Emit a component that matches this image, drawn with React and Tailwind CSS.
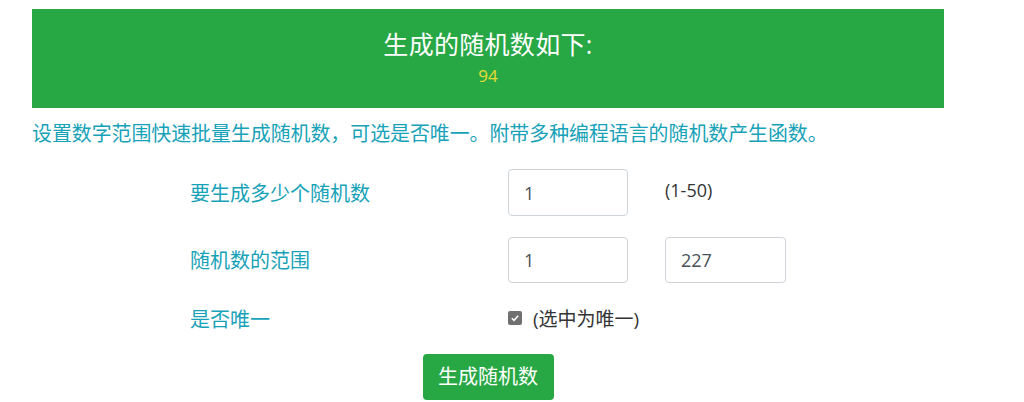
import { useState } from "react";

const font = { fontFamily: '"Open Sans", "Noto Sans CJK SC", sans-serif' };

export default function App() {
  const [count, setCount] = useState("1");
  const [min, setMin] = useState("1");
  const [max, setMax] = useState("227");
  const [unique, setUnique] = useState(true);

  return (
    <div className="bg-white w-[1024px] h-[402px] overflow-hidden pt-[9px] px-[32px]" style={font}>
      <div className="w-[912px]">
        <div className="bg-[#28a745] h-[99px] flex flex-col items-center pt-[17px]">
          <div className="text-[25px] leading-[36px] text-white tracking-[0.3px]">生成的随机数如下:</div>
          <div className="text-[17px] leading-[24px] mt-[2px] text-[#e4dc36]">94</div>
        </div>

        <p className="mt-[11px] text-[19.9px] leading-[30px] text-[#17a2b8]">
          设置数字范围快速批量生成随机数，可选是否唯一。附带多种编程语言的随机数产生函数。
        </p>

        <div className="pl-[158px] mt-[20px]">
          <div className="flex items-center h-[47px]">
            <label className="w-[318px] text-[20px] text-[#17a2b8] mt-[3px]">要生成多少个随机数</label>
            <input
              value={count}
              onChange={(e) => setCount(e.target.value)}
              className="w-[120px] h-[47px] border border-[#ced4da] rounded-[4px] pl-[15px] text-[18px] text-[#495057] outline-none"
            />
            <span className="ml-[37px] mb-[5px] text-[18px] text-[#333]">(1-50)</span>
          </div>

          <div className="flex items-center h-[46px] mt-[21px]">
            <label className="w-[318px] text-[20px] text-[#17a2b8] mt-[2px]">随机数的范围</label>
            <input
              value={min}
              onChange={(e) => setMin(e.target.value)}
              className="w-[120px] h-[46px] border border-[#ced4da] rounded-[4px] pl-[15px] text-[18px] text-[#495057] outline-none"
            />
            <input
              value={max}
              onChange={(e) => setMax(e.target.value)}
              className="ml-[37px] w-[121px] h-[46px] border border-[#ced4da] rounded-[4px] pl-[15px] text-[18px] text-[#495057] outline-none"
            />
          </div>

          <div className="flex items-center h-[22px] mt-[24px]">
            <label className="w-[318px] text-[20px] text-[#17a2b8] mt-[4px]">是否唯一</label>
            <button
              onClick={() => setUnique(!unique)}
              className={`w-[14px] h-[14px] rounded-[2px] flex items-center justify-center ${unique ? "bg-[#707070]" : "border border-[#767676] bg-white"}`}
            >
              {unique && (
                <svg viewBox="0 0 12 12" className="w-[10px] h-[10px]">
                  <path d="M2.2 6.3 L4.8 8.8 L9.8 3.2" fill="none" stroke="white" strokeWidth="1.9" />
                </svg>
              )}
            </button>
            <span className="ml-[11px] text-[19px] text-[#333] mt-[3px]">(选中为唯一)</span>
          </div>
        </div>

        <div className="flex justify-center mt-[25px]">
          <button className="bg-[#28a745] text-white text-[20px] w-[131px] h-[46px] rounded-[4px]">
            生成随机数
          </button>
        </div>
      </div>
    </div>
  );
}
